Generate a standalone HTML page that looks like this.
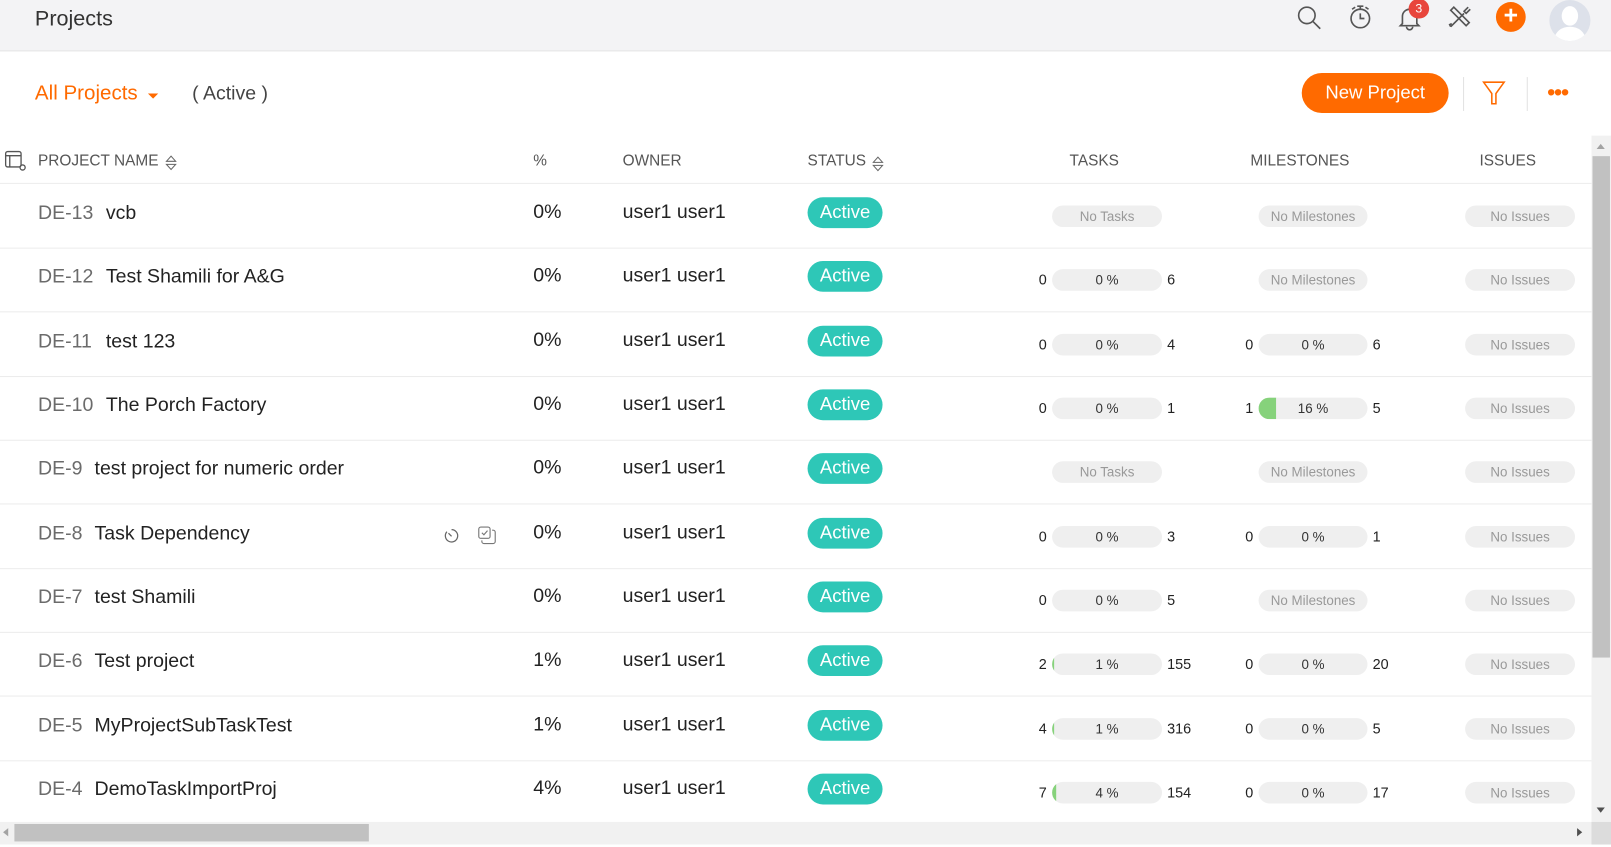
<!DOCTYPE html>
<html><head><meta charset="utf-8">
<style>
html,body{margin:0;padding:0;width:1611px;height:847px;overflow:hidden;background:#fff;font-family:"Liberation Sans",sans-serif;}
#w{position:absolute;left:0;top:0;width:1568px;height:824px;transform:scale(1.02742);transform-origin:0 0;}
.a{position:absolute;white-space:nowrap;}
.hdr{position:absolute;left:0;top:0;width:1568px;height:49px;background:#f3f3f5;border-bottom:1px solid #e4e4e6;}
.th{position:absolute;top:148px;font-size:15px;color:#555;}
.row{position:absolute;left:0;width:1549px;height:62px;border-bottom:1px solid #ececec;}
.id{position:absolute;left:37px;top:18px;font-size:19px;color:#6b6b6b;}
.nm{position:absolute;top:18px;font-size:19px;color:#222;}
.pc{position:absolute;left:519px;top:17px;font-size:19px;color:#222;}
.ow{position:absolute;left:606px;top:17px;font-size:19px;color:#222;}
.st{position:absolute;left:786px;top:13px;width:73px;height:30px;border-radius:15px;background:#2ec7b7;color:#fff;font-size:18px;text-align:center;line-height:29px;}
.pill{position:absolute;top:21px;height:21px;border-radius:11px;background:#efefef;color:#999;font-size:13px;text-align:center;line-height:21px;overflow:hidden;}
.bar{position:absolute;top:21px;height:21px;border-radius:11px;background:#efefef;color:#333;font-size:13px;text-align:center;line-height:21px;overflow:hidden;}
.bar i{position:absolute;left:0;top:0;bottom:0;background:#86d27b;}
.bar span{position:relative;}
.n{position:absolute;top:23px;font-size:14px;color:#222;}
</style></head><body><div id="w">
<div class="hdr"></div>
<div class="a" style="left:34px;top:7px;font-size:21px;color:#333;">Projects</div>
<svg class="a" style="left:1261px;top:4px" width="26" height="26" viewBox="0 0 26 26" fill="none" stroke="#555" stroke-width="1.6"><circle cx="11" cy="11" r="8"/><path d="M17 17l7 7"/></svg>
<svg class="a" style="left:1311px;top:3px" width="26" height="28" viewBox="0 0 26 28" fill="none" stroke="#555" stroke-width="1.6"><circle cx="13" cy="15" r="9"/><path d="M13 10v5h4M10 3h6M13 3v3M5 6l3-2M21 6l-3-2"/></svg>
<svg class="a" style="left:1359px;top:4px" width="26" height="26" viewBox="0 0 26 26" fill="none" stroke="#555" stroke-width="1.6"><path d="M6 19V12a7 7 0 0 1 14 0v7l2 2H4z"/><path d="M10 22a3 3 0 0 0 6 0"/></svg>
<div class="a" style="left:1371px;top:-1px;width:20px;height:19px;border-radius:10px;background:#e8453c;color:#fff;font-size:12px;text-align:center;line-height:19px;">3</div>
<svg class="a" style="left:1408px;top:4px" width="26" height="26" viewBox="0 0 26 26" fill="none" stroke="#555" stroke-width="1.6"><path d="M4 6l3-3 15 15-3 3z"/><path d="M21 3l-4 4 2 2 4-4M17 9L4 22M4 22l-1-2 2-1"/></svg>
<div class="a" style="left:1456px;top:2px;width:29px;height:29px;border-radius:50%;background:#ff6a00;color:#fff;font-size:24px;text-align:center;line-height:28px;font-weight:bold;">+</div>
<div class="a" style="left:1508px;top:0px;width:40px;height:40px;border-radius:50%;background:#dde1ea;overflow:hidden;">
<div class="a" style="left:12px;top:6px;width:16px;height:19px;border-radius:50%;background:#fff;"></div>
<div class="a" style="left:5px;top:26px;width:30px;height:24px;border-radius:50%;background:#fff;"></div></div>
<div class="a" style="left:34px;top:80px;font-size:20px;color:#ff6a00;">All Projects</div>
<div class="a" style="left:144px;top:91px;width:0;height:0;border-left:5px solid transparent;border-right:5px solid transparent;border-top:5px solid #ff6a00;"></div>
<div class="a" style="left:187px;top:81px;font-size:19px;color:#444;">( Active )</div>
<div class="a" style="left:1267px;top:71px;width:143px;height:39px;border-radius:20px;background:#ff6a00;color:#fff;font-size:18px;text-align:center;line-height:38px;">New Project</div>
<div class="a" style="left:1424px;top:75px;width:1px;height:33px;background:#e2e2e2;"></div>
<svg class="a" style="left:1442px;top:78px" width="24" height="26" viewBox="0 0 24 26" fill="none" stroke="#ff6a00" stroke-width="1.5"><path d="M2 2h20l-8 11v10h-4V13z"/></svg>
<div class="a" style="left:1486px;top:75px;width:1px;height:33px;background:#e2e2e2;"></div>
<div class="a" style="left:1506px;top:77px;font-size:22px;color:#ff6a00;font-weight:bold;letter-spacing:-1px;">•••</div>
<svg class="a" style="left:4px;top:146px" width="24" height="22" viewBox="0 0 24 22" fill="none" stroke="#555" stroke-width="1.3"><rect x="1.5" y="1.5" width="15" height="15" rx="2"/><path d="M1.5 5.5h15M5.5 5.5v11"/><circle cx="18" cy="17" r="2.5"/></svg>
<div class="th" style="left:37px;">PROJECT NAME</div>
<svg class="a" style="left:161px;top:150px" width="11" height="17" viewBox="0 0 11 17" fill="none" stroke="#666" stroke-width="1"><path d="M1 7l4.5-5 4.5 5zM1 10l4.5 5 4.5-5z"/></svg>
<div class="th" style="left:519px;">%</div>
<div class="th" style="left:606px;">OWNER</div>
<div class="th" style="left:786px;">STATUS</div>
<svg class="a" style="left:849px;top:151px" width="11" height="17" viewBox="0 0 11 17" fill="none" stroke="#666" stroke-width="1"><path d="M1 7l4.5-5 4.5 5zM1 10l4.5 5 4.5-5z"/></svg>
<div class="th" style="left:1041px;">TASKS</div>
<div class="th" style="left:1217px;">MILESTONES</div>
<div class="th" style="left:1440px;">ISSUES</div>
<div class="a" style="left:0;top:178px;width:1549px;height:1px;background:#ececec;"></div>

<div class="row" style="top:179px"><span class="id">DE-13</span><span class="nm" style="left:103px">vcb</span><span class="pc">0%</span><span class="ow">user1 user1</span><div class="st">Active</div>
<div class="pill" style="left:1024px;width:107px">No Tasks</div><div class="pill" style="left:1225px;width:106px">No Milestones</div><div class="pill" style="left:1426px;width:107px">No Issues</div></div>

<div class="row" style="top:241px"><span class="id">DE-12</span><span class="nm" style="left:103px">Test Shamili for A&amp;G</span><span class="pc">0%</span><span class="ow">user1 user1</span><div class="st">Active</div>
<span class="n" style="left:1011px">0</span><div class="bar" style="left:1024px;width:107px"><span>0 %</span></div><span class="n" style="left:1136px">6</span>
<div class="pill" style="left:1225px;width:106px">No Milestones</div><div class="pill" style="left:1426px;width:107px">No Issues</div></div>

<div class="row" style="top:304px"><span class="id">DE-11</span><span class="nm" style="left:103px">test 123</span><span class="pc">0%</span><span class="ow">user1 user1</span><div class="st">Active</div>
<span class="n" style="left:1011px">0</span><div class="bar" style="left:1024px;width:107px"><span>0 %</span></div><span class="n" style="left:1136px">4</span>
<span class="n" style="left:1212px">0</span><div class="bar" style="left:1225px;width:106px"><span>0 %</span></div><span class="n" style="left:1336px">6</span>
<div class="pill" style="left:1426px;width:107px">No Issues</div></div>

<div class="row" style="top:366px"><span class="id">DE-10</span><span class="nm" style="left:103px">The Porch Factory</span><span class="pc">0%</span><span class="ow">user1 user1</span><div class="st">Active</div>
<span class="n" style="left:1011px">0</span><div class="bar" style="left:1024px;width:107px"><span>0 %</span></div><span class="n" style="left:1136px">1</span>
<span class="n" style="left:1212px">1</span><div class="bar" style="left:1225px;width:106px"><i style="width:17px"></i><span>16 %</span></div><span class="n" style="left:1336px">5</span>
<div class="pill" style="left:1426px;width:107px">No Issues</div></div>

<div class="row" style="top:428px"><span class="id">DE-9</span><span class="nm" style="left:92px">test project for numeric order</span><span class="pc">0%</span><span class="ow">user1 user1</span><div class="st">Active</div>
<div class="pill" style="left:1024px;width:107px">No Tasks</div><div class="pill" style="left:1225px;width:106px">No Milestones</div><div class="pill" style="left:1426px;width:107px">No Issues</div></div>

<div class="row" style="top:491px"><span class="id">DE-8</span><span class="nm" style="left:92px">Task Dependency</span>
<svg class="a" style="left:431px;top:22px" width="17" height="17" viewBox="0 0 17 17" fill="none" stroke="#666" stroke-width="1.2"><path d="M8.5 2.5a6 6 0 1 1-4.5 2"/><path d="M8.5 9L5.5 6"/></svg>
<svg class="a" style="left:465px;top:21px" width="19" height="19" viewBox="0 0 19 19" fill="none" stroke="#777" stroke-width="1.1"><rect x="1" y="1" width="11" height="11" rx="2"/><path d="M14 4h1a2 2 0 0 1 2 2v9a2 2 0 0 1-2 2H6a2 2 0 0 1-2-2v-1M4 6.5l2 2 3.5-4"/></svg>
<span class="pc">0%</span><span class="ow">user1 user1</span><div class="st">Active</div>
<span class="n" style="left:1011px">0</span><div class="bar" style="left:1024px;width:107px"><span>0 %</span></div><span class="n" style="left:1136px">3</span>
<span class="n" style="left:1212px">0</span><div class="bar" style="left:1225px;width:106px"><span>0 %</span></div><span class="n" style="left:1336px">1</span>
<div class="pill" style="left:1426px;width:107px">No Issues</div></div>

<div class="row" style="top:553px"><span class="id">DE-7</span><span class="nm" style="left:92px">test Shamili</span><span class="pc">0%</span><span class="ow">user1 user1</span><div class="st">Active</div>
<span class="n" style="left:1011px">0</span><div class="bar" style="left:1024px;width:107px"><span>0 %</span></div><span class="n" style="left:1136px">5</span>
<div class="pill" style="left:1225px;width:106px">No Milestones</div><div class="pill" style="left:1426px;width:107px">No Issues</div></div>

<div class="row" style="top:615px"><span class="id">DE-6</span><span class="nm" style="left:92px">Test project</span><span class="pc">1%</span><span class="ow">user1 user1</span><div class="st">Active</div>
<span class="n" style="left:1011px">2</span><div class="bar" style="left:1024px;width:107px"><i style="width:2px"></i><span>1 %</span></div><span class="n" style="left:1136px">155</span>
<span class="n" style="left:1212px">0</span><div class="bar" style="left:1225px;width:106px"><span>0 %</span></div><span class="n" style="left:1336px">20</span>
<div class="pill" style="left:1426px;width:107px">No Issues</div></div>

<div class="row" style="top:678px"><span class="id">DE-5</span><span class="nm" style="left:92px">MyProjectSubTaskTest</span><span class="pc">1%</span><span class="ow">user1 user1</span><div class="st">Active</div>
<span class="n" style="left:1011px">4</span><div class="bar" style="left:1024px;width:107px"><i style="width:2px"></i><span>1 %</span></div><span class="n" style="left:1136px">316</span>
<span class="n" style="left:1212px">0</span><div class="bar" style="left:1225px;width:106px"><span>0 %</span></div><span class="n" style="left:1336px">5</span>
<div class="pill" style="left:1426px;width:107px">No Issues</div></div>

<div class="row" style="top:740px"><span class="id">DE-4</span><span class="nm" style="left:92px">DemoTaskImportProj</span><span class="pc">4%</span><span class="ow">user1 user1</span><div class="st">Active</div>
<span class="n" style="left:1011px">7</span><div class="bar" style="left:1024px;width:107px"><i style="width:4px"></i><span>4 %</span></div><span class="n" style="left:1136px">154</span>
<span class="n" style="left:1212px">0</span><div class="bar" style="left:1225px;width:106px"><span>0 %</span></div><span class="n" style="left:1336px">17</span>
<div class="pill" style="left:1426px;width:107px">No Issues</div></div>

<div class="a" style="left:1549px;top:132px;width:19px;height:668px;background:#f1f1f1;"></div>
<div class="a" style="left:1554px;top:140px;width:0;height:0;border-left:4px solid transparent;border-right:4px solid transparent;border-bottom:5px solid #a3a3a3;"></div>
<div class="a" style="left:1550px;top:152px;width:17px;height:488px;background:#c1c1c1;"></div>
<div class="a" style="left:1554px;top:786px;width:0;height:0;border-left:4px solid transparent;border-right:4px solid transparent;border-top:5px solid #505050;"></div>
<div class="a" style="left:0;top:800px;width:1549px;height:22px;background:#f1f1f1;"></div>
<div class="a" style="left:14px;top:802px;width:345px;height:17px;background:#c1c1c1;"></div>
<div class="a" style="left:3px;top:806px;width:0;height:0;border-top:4px solid transparent;border-bottom:4px solid transparent;border-right:5px solid #a3a3a3;"></div>
<div class="a" style="left:1535px;top:806px;width:0;height:0;border-top:4px solid transparent;border-bottom:4px solid transparent;border-left:5px solid #505050;"></div>
<div class="a" style="left:1549px;top:800px;width:19px;height:22px;background:#dcdcdc;"></div>
</div></body></html>
